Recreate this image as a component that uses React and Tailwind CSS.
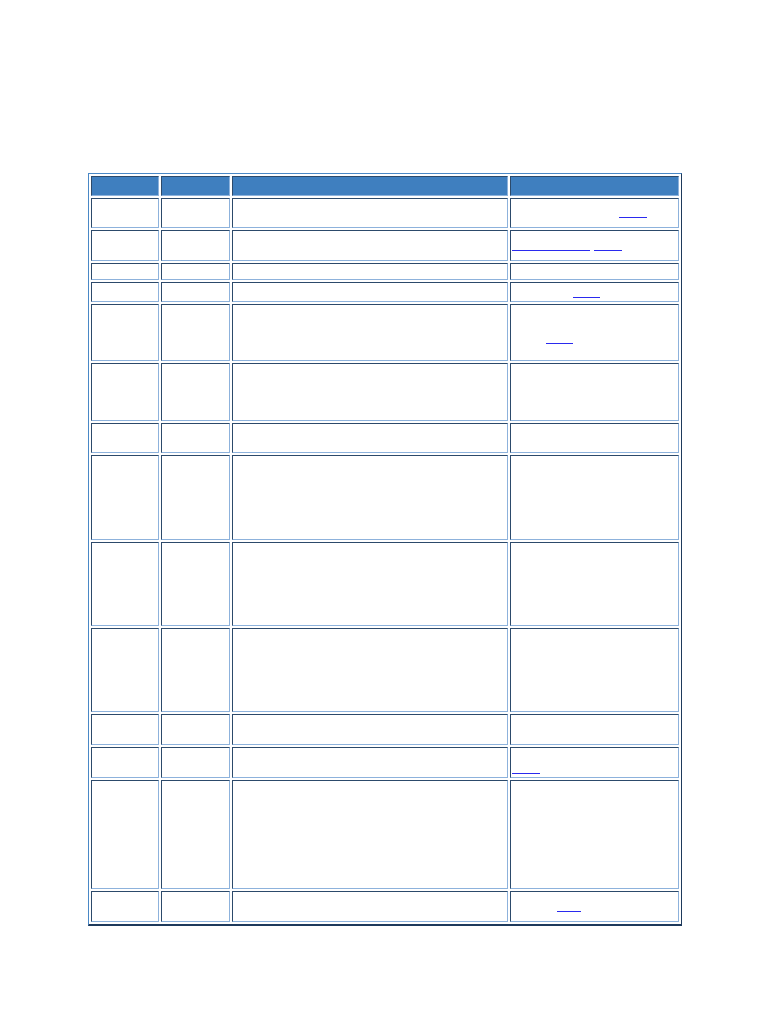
const widths = ["w-[68px]", "w-[69px]", "w-[276px]", "w-[169px]"];

// height of each body row, and the blank links sitting in the last column
const rows = [
  { h: "h-[30px]", links: [{ ml: "ml-[108px]", mt: "mt-[18px]", w: "w-[28px]" }] },
  { h: "h-[31px]", links: [{ ml: "ml-[1px]", mt: "mt-[19px]", w: "w-[78px]" }, { ml: "ml-[4px]", mt: "mt-[19px]", w: "w-[28px]" }] },
  { h: "h-[17px]", links: [] },
  { h: "h-[20px]", links: [{ ml: "ml-[62px]", mt: "mt-[14px]", w: "w-[27px]" }] },
  { h: "h-[57px]", links: [{ ml: "ml-[35px]", mt: "mt-[38px]", w: "w-[27px]" }] },
  { h: "h-[58px]", links: [] },
  { h: "h-[30px]", links: [] },
  { h: "h-[85px]", links: [] },
  { h: "h-[84px]", links: [] },
  { h: "h-[84px]", links: [] },
  { h: "h-[31px]", links: [] },
  { h: "h-[31px]", links: [{ ml: "ml-[1px]", mt: "mt-[25px]", w: "w-[28px]" }] },
  { h: "h-[109px]", links: [] },
  { h: "h-[31px]", links: [{ ml: "ml-[46px]", mt: "mt-[19px]", w: "w-[24px]" }] },
];

const cell =
  "p-0 align-top border border-t-[#2c4a6b] border-l-[#2c4a6b] border-b-[#8db2dc] border-r-[#8db2dc]";

export default function App() {
  return (
    <div className="min-h-[1024px] w-[768px] bg-white pt-[173px] pl-[88px] font-['Liberation_Sans',Arial,sans-serif] text-[13px]">
      <table className="table-fixed border-separate border-spacing-[2px] border border-b-2 border-t-[#4a88c6] border-l-[#4a88c6] border-b-[#1e3a5c] border-r-[#1e3a5c] bg-white">
        <thead>
          <tr>
            {widths.map((w, i) => (
              <th key={i} className={`${cell} ${w} h-[20px] bg-[#3f7fbf]`}></th>
            ))}
          </tr>
        </thead>
        <tbody>
          {rows.map((r, i) => (
            <tr key={i}>
              <td className={`${cell} ${r.h}`}></td>
              <td className={`${cell} ${r.h}`}></td>
              <td className={`${cell} ${r.h}`}></td>
              <td className={`${cell} ${r.h}`}>
                <div className="flex">
                  {r.links.map((l, j) => (
                    <a key={j} href="#" className={`block ${l.ml} ${l.mt} ${l.w} h-px bg-[#2a2aee]`}></a>
                  ))}
                </div>
              </td>
            </tr>
          ))}
        </tbody>
      </table>
    </div>
  );
}
